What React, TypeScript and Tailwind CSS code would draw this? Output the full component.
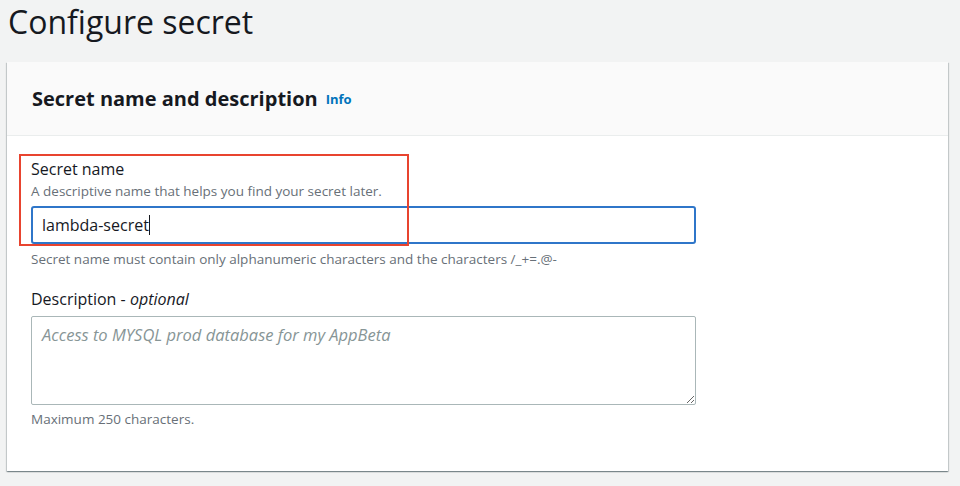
import React from "react";

const FieldHint = ({ children }: { children: React.ReactNode }) => (
  <p className="text-[13.5px] leading-[19px] text-[#687078]">{children}</p>
);

export default function App() {
  return (
    <div className="min-h-screen bg-[#f2f3f3] font-['Open_Sans',sans-serif] text-[#16191f]">
      <h1 className="px-2 pt-[2px] text-[32px] leading-[40px] font-normal">
        Configure secret
      </h1>

      <div className="mt-[20px] ml-[7px] w-[941px] bg-white shadow-[0_1px_1px_0_rgba(0,28,36,0.3),1px_1px_1px_0_rgba(0,28,36,0.15),-1px_1px_1px_0_rgba(0,28,36,0.15)]">
        <div className="flex h-[74px] items-center gap-2 border-b border-[#eaeded] bg-[#fafafa] px-[25px]">
          <h2 className="text-[20px] font-bold leading-[28px]">
            Secret name and description
          </h2>
          <a className="mt-[3px] text-[13px] font-bold text-[#0073bb]">Info</a>
        </div>

        <div className="relative px-[24px] pt-[22px] pb-[42px]">
          {/* annotation box */}
          <div className="pointer-events-none absolute top-[18px] left-[12px] h-[92px] w-[390px] border-2 border-[#e8442f]" />

          <div className="flex flex-col">
            <label className="text-[16px] leading-[22px]">Secret name</label>
            <div className="mt-[2px]">
              <FieldHint>A descriptive name that helps you find your secret later.</FieldHint>
            </div>
            <div className="mt-[5px] flex h-[38px] w-[665px] items-center rounded-[3px] border-2 border-[#2f76c9] bg-white px-[9px]">
              <span className="text-[16px]">lambda-secret</span>
              <span className="h-[20px] w-px bg-[#16191f]" />
            </div>
            <div className="mt-[6px]">
              <FieldHint>
                Secret name must contain only alphanumeric characters and the characters /_+=.@-
              </FieldHint>
            </div>
          </div>

          <div className="mt-[19px] flex flex-col">
            <label className="text-[16px] leading-[22px]">
              Description - <i>optional</i>
            </label>
            <textarea
              className="mt-[6px] h-[89px] w-[665px] rounded-[2px] border border-[#aab7b8] bg-white px-[10px] py-[6px] text-[16.5px] italic placeholder:text-[#879596] outline-none"
              placeholder="Access to MYSQL prod database for my AppBeta"
            />
            <div className="mt-[5px]">
              <FieldHint>Maximum 250 characters.</FieldHint>
            </div>
          </div>
        </div>
      </div>
    </div>
  );
}
